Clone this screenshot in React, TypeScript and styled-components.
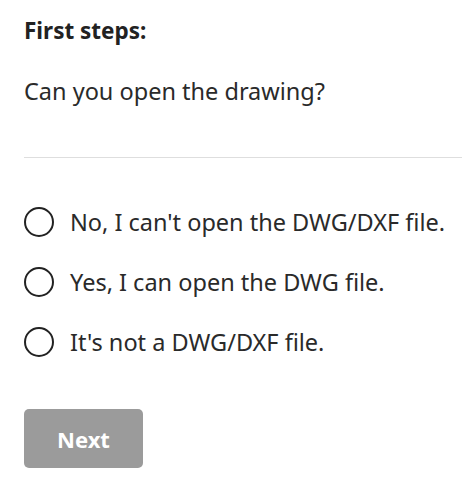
import React, { useState } from "react";
import styled, { createGlobalStyle } from "styled-components";

const GlobalStyle = createGlobalStyle`
  html, body {
    margin: 0;
    padding: 0;
    background: #ffffff;
  }
  body {
    font-family: "Noto Sans", "Open Sans", sans-serif;
    color: #222222;
  }
`;

const Panel = styled.div`
  display: flex;
  flex-direction: column;
  padding: 17px 2px 0 24px;
`;

const Heading = styled.h2`
  margin: 0;
  font-size: 22.5px;
  line-height: 28px;
  font-weight: 700;
  color: #222222;
`;

const Question = styled.p`
  margin: 30px 0 0;
  font-size: 23.5px;
  line-height: 32px;
  font-weight: 400;
  color: #2a2a2a;
`;

const Divider = styled.hr`
  margin: 50px 0 0;
  border: 0;
  border-top: 1px solid #dedede;
  height: 0;
`;

const Options = styled.div`
  display: flex;
  flex-direction: column;
  gap: 20px;
  margin-top: 44px;
`;

const Option = styled.label`
  display: flex;
  align-items: center;
  gap: 16px;
  height: 40px;
  cursor: pointer;
  font-size: 23.5px;
  line-height: 32px;
  color: #2a2a2a;
`;

const Circle = styled.span<{ $checked: boolean }>`
  box-sizing: border-box;
  width: 30px;
  height: 30px;
  flex: 0 0 30px;
  border-radius: 50%;
  border: 2px solid #222222;
  display: flex;
  align-items: center;
  justify-content: center;

  &::after {
    content: "";
    width: 14px;
    height: 14px;
    border-radius: 50%;
    background: #222222;
    display: ${(p) => (p.$checked ? "block" : "none")};
  }
`;

const HiddenInput = styled.input`
  position: absolute;
  opacity: 0;
  width: 0;
  height: 0;
`;

const NextButton = styled.button<{ $enabled: boolean }>`
  margin-top: 47px;
  align-self: flex-start;
  width: 119px;
  height: 59px;
  border: 0;
  border-radius: 5px;
  background: ${(p) => (p.$enabled ? "#0696d7" : "#9b9b9b")};
  color: #ffffff;
  font-family: "Noto Sans", "Open Sans", sans-serif;
  font-size: 22px;
  font-weight: 700;
  cursor: ${(p) => (p.$enabled ? "pointer" : "default")};
`;

const choices = [
  "No, I can't open the DWG/DXF file.",
  "Yes, I can open the DWG file.",
  "It's not a DWG/DXF file.",
];

export default function App() {
  const [picked, setPicked] = useState<number | null>(null);

  return (
    <>
      <GlobalStyle />
      <Panel>
        <Heading>First steps:</Heading>
        <Question>Can you open the drawing?</Question>
        <Divider />
        <Options>
          {choices.map((text, i) => (
            <Option key={text}>
              <HiddenInput
                type="radio"
                name="first-steps"
                checked={picked === i}
                onChange={() => setPicked(i)}
              />
              <Circle $checked={picked === i} />
              {text}
            </Option>
          ))}
        </Options>
        <NextButton $enabled={picked !== null} disabled={picked === null}>
          Next
        </NextButton>
      </Panel>
    </>
  );
}
